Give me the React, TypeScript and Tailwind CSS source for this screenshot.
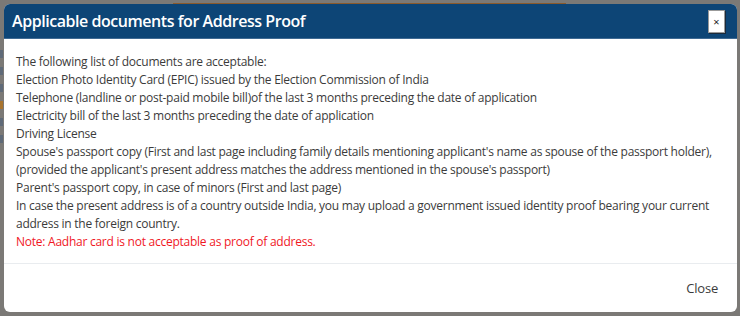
const LINES = [
  "The following list of documents are acceptable:",
  "Election Photo Identity Card (EPIC) issued by the Election Commission of India",
  "Telephone (landline or post-paid mobile bill)of the last 3 months preceding the date of application",
  "Electricity bill of the last 3 months preceding the date of application",
  "Driving License",
  "Spouse's passport copy (First and last page including family details mentioning applicant's name as spouse of the passport holder),",
  "(provided the applicant's present address matches the address mentioned in the spouse's passport)",
  "Parent's passport copy, in case of minors (First and last page)",
  "In case the present address is of a country outside India, you may upload a government issued identity proof bearing your current",
  "address in the foreign country.",
]

export default function App() {
  return (
    <div className="w-[740px] h-[316px] bg-[#7b7976] overflow-hidden relative font-['Open_Sans',sans-serif]">
      <div className="absolute top-[3px] left-[173px] w-[393px] h-[2px] bg-[#8a5a2c]" />
      <div className="absolute top-[40px] left-0 w-[4px] h-[250px] flex flex-col gap-[9px] pt-[10px]">
        <span className="block w-[3px] h-[8px] bg-[#5f6a78]" />
        <span className="block w-[3px] h-[8px] bg-[#5f6a78]" />
        <span className="block w-[3px] h-[8px] bg-[#5f6a78]" />
        <span className="block w-[3px] h-[8px] bg-[#a8742e]" />
        <span className="block w-[3px] h-[8px] bg-[#5f6a78]" />
        <span className="block w-[3px] h-[8px] bg-[#5f6a78]" />
      </div>
      <div className="absolute top-[4px] left-[4px] w-[733px] h-[308px] bg-white rounded-[6px] overflow-hidden flex flex-col">
        <div className="h-[35px] bg-[#0d4576] flex items-center justify-between pl-[8px] pr-[12px] border-b border-[#3f6a93]">
          <h1 className="text-white text-[16px] font-semibold tracking-[-0.45px]">Applicable documents for Address Proof</h1>
          <button className="w-[17px] h-[23px] bg-white border border-[#9a9a9a] shadow-[1px_1px_0_#1b2a3a] flex items-center justify-center text-[11px] leading-none text-[#222]">
            ×
          </button>
        </div>
        <div className="pt-[14px] pb-[12px] px-[12px] text-[12px] leading-[18px] text-[#3b3b3b] tracking-[-0.25px] border-b border-[#e9ecef]">
          {LINES.map((l) => (
            <div key={l} className="whitespace-nowrap">{l}</div>
          ))}
          <div className="text-[#f0181f]">Note: Aadhar card is not acceptable as proof of address.</div>
        </div>
        <div className="flex-1 flex items-center justify-end pr-[19px]">
          <span className="text-[13px] text-[#3b3b3b] mt-[2px] tracking-[-0.2px]">Close</span>
        </div>
      </div>
    </div>
  )
}
